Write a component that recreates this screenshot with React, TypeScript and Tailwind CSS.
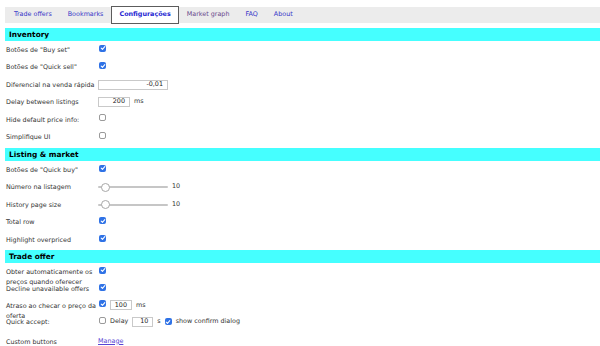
import React from "react";

const font = { fontFamily: '"DejaVu Sans", Verdana, sans-serif' };

function Check({ on = true }: { on?: boolean }) {
  if (!on) {
    return <span className="inline-block h-[7px] w-[7px] rounded-[2px] border border-[#9a9a9a] bg-white" />;
  }
  return (
    <span className="inline-flex h-[7px] w-[7px] items-center justify-center rounded-[2px] bg-[#2f72e6]">
      <svg viewBox="0 0 8 8" className="h-[6px] w-[6px]">
        <path d="M1.6 4.2 L3.3 5.8 L6.4 2.2" fill="none" stroke="#fff" strokeWidth="1.4" strokeLinecap="round" strokeLinejoin="round" />
      </svg>
    </span>
  );
}

function Field({ value, w }: { value: string; w: string }) {
  return (
    <span className={`inline-flex h-[10px] items-center justify-end border border-[#c9c9c9] bg-white pr-[4px] text-[#222] ${w}`}>
      {value}
    </span>
  );
}

function Slider() {
  return (
    <span className="relative inline-flex h-[10px] w-[70px] items-center">
      <span className="h-[2px] w-full rounded-full bg-[#c6c6c6]" />
      <span className="absolute left-[3px] top-[0.5px] h-[9px] w-[9px] rounded-full border border-[#a8a8a8] bg-white" />
    </span>
  );
}

function Row({ label, h = "h-[17.5px]", children }: { label: React.ReactNode; h?: string; children?: React.ReactNode }) {
  return (
    <div className={`flex items-center ${h}`}>
      <div className="h-[10px] w-[92px] shrink-0 pl-[1px] leading-[10px] text-[#333]">{label}</div>
      <div className="flex items-center gap-[4px] pl-[1px] text-[#333]">{children}</div>
    </div>
  );
}

function Header({ title, mt }: { title: string; mt: string }) {
  return (
    <div className={`flex h-[13px] items-center bg-[#45ffff] pl-[4px] text-[7.4px] font-bold text-black ${mt}`}>
      {title}
    </div>
  );
}

const tabs = ["Trade offers", "Bookmarks", "Configurações", "Market graph", "FAQ", "About"];

export default function App() {
  return (
    <div className="h-[346px] w-[600px] overflow-hidden bg-white pl-[5px] text-[6.4px]" style={font}>
      <div className="mt-[6px] flex h-[18px] items-center">
        <div className="flex h-[16px] w-full items-center bg-[#ececec] pl-[1px]">
          {tabs.map((t) =>
            t === "Configurações" ? (
              <span key={t} className="flex h-[18px] items-center border border-[#5c5c5c] bg-white px-[7px] font-bold text-[#1f1fd2]">
                {t}
              </span>
            ) : (
              <span key={t} className={`px-[8px] ${t === "Market graph" ? "text-[#6a4a8c]" : "text-[#3535c8]"}`}>
                {t}
              </span>
            )
          )}
        </div>
      </div>

      <Header title="Inventory" mt="mt-[4px]" />
      <Row label='Botões de "Buy set"'>
        <span className="pl-[1px]"><Check /></span>
      </Row>
      <Row label='Botões de "Quick sell"'>
        <span className="pl-[1px]"><Check /></span>
      </Row>
      <Row label="Diferencial na venda rápida">
        <Field value="-0,01" w="w-[70px]" />
      </Row>
      <Row label="Delay between listings">
        <Field value="200" w="w-[32px]" />
        <span>ms</span>
      </Row>
      <Row label="Hide default price info:">
        <span className="pl-[1px]"><Check on={false} /></span>
      </Row>
      <Row label="Simplifique UI">
        <span className="pl-[1px]"><Check on={false} /></span>
      </Row>

      <Header title="Listing & market" mt="mt-[2px]" />
      <Row label='Botões de "Quick buy"'>
        <span className="pl-[1px]"><Check /></span>
      </Row>
      <Row label="Número na listagem">
        <Slider />
        <span>10</span>
      </Row>
      <Row label="History page size">
        <Slider />
        <span>10</span>
      </Row>
      <Row label="Total row">
        <span className="pl-[1px]"><Check /></span>
      </Row>
      <Row label="Highlight overpriced">
        <span className="pl-[1px]"><Check /></span>
      </Row>

      <Header title="Trade offer" mt="mt-[1.5px]" />
      <Row label={<>Obter automaticamente os<br />preços quando oferecer</>}>
        <span className="pl-[1px]"><Check /></span>
      </Row>
      <Row h="h-[17px]" label="Decline unavailable offers">
        <span className="pl-[1px]"><Check /></span>
      </Row>
      <Row h="h-[16px]" label={<>Atraso ao checar o preço da<br />oferta</>}>
        <span className="pl-[1px]"><Check /></span>
        <Field value="100" w="w-[22px]" />
        <span>ms</span>
      </Row>
      <Row h="h-[17px]" label="Quick accept:">
        <span className="pl-[1px]"><Check on={false} /></span>
        <span>Delay</span>
        <Field value="10" w="w-[21px]" />
        <span>s</span>
        <Check />
        <span>show confirm dialog</span>
      </Row>
      <Row h="h-[22px]" label="Custom buttons">
        <span className="text-[#5844d4] underline">Manage</span>
      </Row>
    </div>
  );
}
